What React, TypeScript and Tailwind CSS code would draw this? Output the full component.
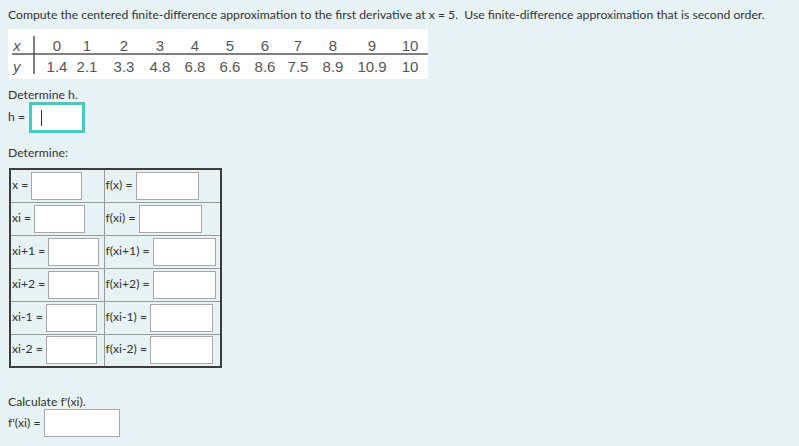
import React from 'react';

const xs = ['0', '1', '2', '3', '4', '5', '6', '7', '8', '9', '10'];
const ys = ['1.4', '2.1', '3.3', '4.8', '6.8', '6.6', '8.6', '7.5', '8.9', '10.9', '10'];
const cols = [57, 87, 124, 160, 195, 230, 265, 298, 333, 372, 410];

const rows = [
  { a: 'x =', b: 'f(x) =' },
  { a: 'xi =', b: 'f(xi) =' },
  { a: 'xi+1 =', b: 'f(xi+1) =' },
  { a: 'xi+2 =', b: 'f(xi+2) =' },
  { a: 'xi-1 =', b: 'f(xi-1) =' },
  { a: 'xi-2 =', b: 'f(xi-2) =' },
];

function DataTable() {
  // scanned table picture
  return (
    <svg width="420" height="50" viewBox="0 0 420 50" className="block bg-white">
      <line x1="4" y1="25" x2="420" y2="25" stroke="#555" strokeWidth="1.5" />
      <line x1="26" y1="7" x2="26" y2="45" stroke="#555" strokeWidth="1.5" />
      <text x="9" y="22" fontSize="14" fill="#555" fontStyle="italic" textAnchor="middle" fontFamily="'DejaVu Sans', sans-serif">x</text>
      <text x="9" y="43" fontSize="14" fill="#555" fontStyle="italic" textAnchor="middle" fontFamily="'DejaVu Sans', sans-serif">y</text>
      {xs.map((v, i) => (
        <text key={'x' + i} x={cols[i] - 8} y="22" fontSize="15" fill="#555" textAnchor="middle" fontFamily="'Liberation Sans', sans-serif">{v}</text>
      ))}
      {ys.map((v, i) => (
        <text key={'y' + i} x={cols[i] - 8} y="43" fontSize="15" fill="#555" textAnchor="middle" fontFamily="'Liberation Sans', sans-serif">{v}</text>
      ))}
    </svg>
  );
}

function Box({ w }: { w: string }) {
  return <span className={`inline-block align-middle h-[28px] bg-white border border-[#a8a8a8] ${w}`} />;
}

export default function App() {
  return (
    <div className="w-[799px] h-[446px] bg-[#e7f2f5] text-[#333] text-[12.2px] px-2 pt-[6px] overflow-hidden" style={{ fontFamily: "Lato, sans-serif" }}>
      <p className="leading-[18px] whitespace-nowrap">
        Compute the centered finite-difference approximation to the first derivative at x = 5.&nbsp; Use finite-difference approximation that is second order.
      </p>

      <div className="mt-[5px]">
        <DataTable />
      </div>

      <p className="mt-[7px] leading-[18px]">Determine h.</p>
      <div className="flex items-center gap-[4px] mt-[-2px]">
        <span>h =</span>
        <span className="flex items-center w-[56px] h-[31px] bg-white border-[3px] border-[#4cc7c0] pl-[9px]">
          <span className="w-px h-[16px] bg-[#333]" />
        </span>
      </div>

      <p className="mt-[11px] leading-[18px]">Determine:</p>

      <table className="mt-[6px] ml-[1px] border-collapse border-2 border-[#3d3d3d]">
        <tbody>
          {rows.map((r, i) => (
            <tr key={i} className="h-[33px]">
              <td className="w-[94px] border border-[#9a9a9a] px-[1px] whitespace-nowrap">
                {r.a} <Box w="w-[51px]" />
              </td>
              <td className="w-[117px] border border-[#9a9a9a] px-[1px] whitespace-nowrap">
                {r.b} <Box w="w-[63px]" />
              </td>
            </tr>
          ))}
        </tbody>
      </table>

      <p className="mt-[25px] leading-[18px]">Calculate f'(xi).</p>
      <div className="flex items-center gap-[4px] mt-[-2px]">
        <span>f'(xi) =</span>
        <Box w="w-[76px]" />
      </div>
    </div>
  );
}
